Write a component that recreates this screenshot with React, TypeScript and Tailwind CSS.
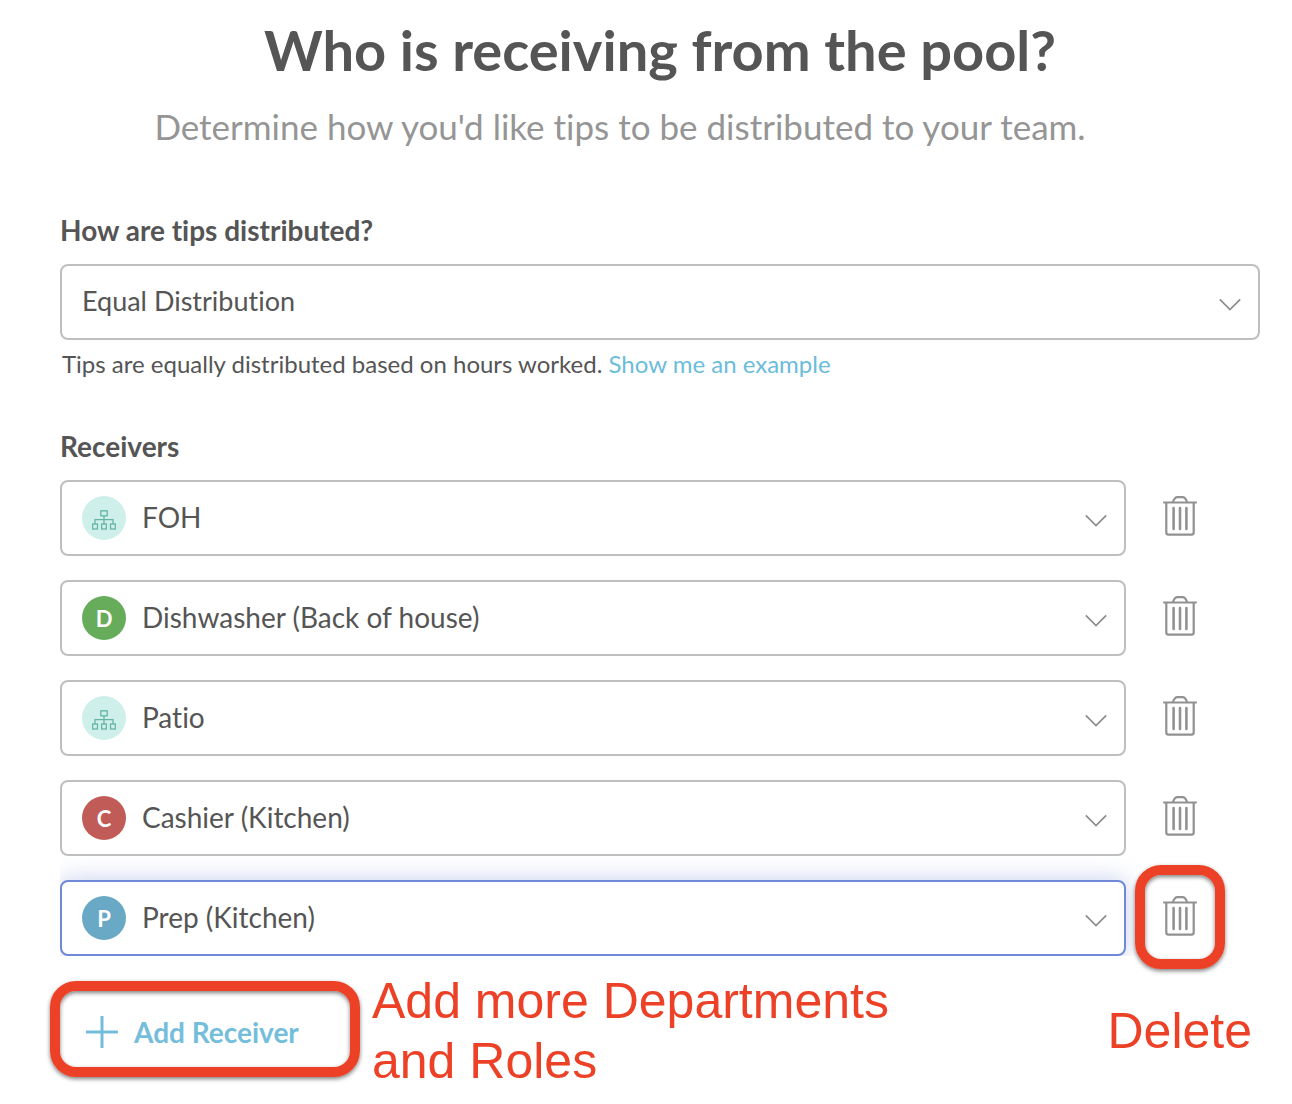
import React, { useState } from "react";

type Receiver = {
  id: number;
  name: string;
  kind: "department" | "role";
  color: string;
};

const initialReceivers: Receiver[] = [
  { id: 1, name: "FOH", kind: "department", color: "bg-[#cff0ea]" },
  { id: 2, name: "Dishwasher (Back of house)", kind: "role", color: "bg-[#67ac5b]" },
  { id: 3, name: "Patio", kind: "department", color: "bg-[#cff0ea]" },
  { id: 4, name: "Cashier (Kitchen)", kind: "role", color: "bg-[#c15b58]" },
  { id: 5, name: "Prep (Kitchen)", kind: "role", color: "bg-[#69a9c5]" },
];

function Chevron() {
  return (
    <svg
      className="pointer-events-none absolute right-[18px] top-8 h-4 w-6"
      viewBox="0 0 24 16"
      fill="none"
      stroke="#8c8c8c"
      strokeWidth="1.7"
    >
      <path d="M1.8 3.3 12 13.5 22.2 3.3" />
    </svg>
  );
}

function DepartmentIcon() {
  return (
    <svg
      className="mt-1 h-5 w-6"
      viewBox="0 0 24 20"
      fill="none"
      stroke="#64b5a5"
      strokeWidth="1.3"
    >
      <rect x="8.8" y="0.8" width="6.4" height="5" />
      <path d="M12 6v8M3 14v-4.3h18V14" />
      <rect x="0.7" y="14" width="4.8" height="5" />
      <rect x="9.6" y="14" width="4.8" height="5" />
      <rect x="18.5" y="14" width="4.8" height="5" />
    </svg>
  );
}

function TrashIcon() {
  return (
    <svg
      className="h-10 w-9"
      viewBox="0 0 36 40"
      fill="none"
      stroke="#919191"
      strokeWidth="2.2"
      strokeLinecap="round"
      strokeLinejoin="round"
    >
      <path d="M2 6.5h32M4.3 7v29.5a2.2 2.2 0 0 0 2.2 2.2h23a2.2 2.2 0 0 0 2.2-2.2V7" />
      <path d="M11 6c1-3.2 2.6-4.900 4.500-4.900h5c1.900 0 3.500 1.700 4.500 4.900" />
      <path d="M11.600 12v21M18 12v21M24.400 12v21" strokeWidth="2.600" />
    </svg>
  );
}

function App() {
  const [receivers, setReceivers] = useState(initialReceivers);
  const last = receivers.length - 1;

  const removeReceiver = (id: number) =>
    setReceivers(receivers.filter((r) => r.id !== id));

  return (
    <div className="min-h-screen bg-white pb-4 pl-15 pr-8 pt-5 font-[Lato,'Liberation_Sans',sans-serif] text-[#555555] [font-variant-ligatures:none]">
      <h1 className="text-center text-[56px] font-bold leading-[60px]">
        Who is receiving from the pool?
      </h1>
      <p className="mt-6 pr-20 text-center text-[35px] leading-[44px] text-[#959595]">
        Determine how you'd like tips to be distributed to your team.
      </p>

      <label
        htmlFor="distribution"
        className="mt-16 block text-[28px] font-bold leading-9"
      >
        How are tips distributed?
      </label>
      <div className="relative mt-4">
        <select
          id="distribution"
          className="h-19 w-full appearance-none rounded-lg border-2 border-[#bfbfbf] bg-white pb-0.5 pl-5 pr-14 text-[27px] outline-none"
        >
          <option>Equal Distribution</option>
        </select>
        <Chevron />
      </div>
      <p className="ml-0.5 mt-2 text-[24px] leading-8">
        Tips are equally distributed based on hours worked.{" "}
        <a href="#example" className="text-[#6cbcdb]">
          Show me an example
        </a>
      </p>

      <h2 className="mt-12 text-[28px] font-bold leading-9">Receivers</h2>
      <ul className="mt-4 flex flex-col gap-6">
        {receivers.map((receiver, i) => (
          <li key={receiver.id} className="flex items-center">
            <div className="relative flex-1">
              <select
                aria-label={`Receiver ${i + 1}`}
                className={
                  i === last
                    ? "block h-19 w-full appearance-none rounded-lg border-2 border-[#7088d8] bg-white pb-0.5 pl-20 pr-14 text-[28px] shadow-[0_0_24px_#7088d866] outline-none [clip-path:inset(-24px_-24px_0_0)]"
                    : "block h-19 w-full appearance-none rounded-lg border-2 border-[#bfbfbf] bg-white pb-0.5 pl-20 pr-14 text-[28px] outline-none"
                }
              >
                <option>{receiver.name}</option>
              </select>
              <span
                className={`pointer-events-none absolute left-[22px] top-4 flex size-11 items-center justify-center rounded-full text-[22px] font-bold text-white ${receiver.color}`}
              >
                {receiver.kind === "department" ? (
                  <DepartmentIcon />
                ) : (
                  receiver.name[0]
                )}
              </span>
              <Chevron />
            </div>
            <div className="relative ml-9 mr-[62px] pb-1">
              <button
                type="button"
                aria-label={`Delete ${receiver.name}`}
                className="block cursor-pointer"
                onClick={() => removeReceiver(receiver.id)}
              >
                <TrashIcon />
              </button>
              {i === last && (
                <span className="pointer-events-none absolute -inset-x-[27px] -bottom-[29px] -top-[31px] rounded-[26px] border-10 border-[#ec4126] shadow-[0_2px_4px_#00000080,inset_0_2px_4px_#00000080]" />
              )}
            </div>
          </li>
        ))}
      </ul>

      <div className="mt-[15px] flex items-start text-[50px] leading-[60px] text-[#ec4126]">
        <div className="-ml-2.5 mt-2.5 rounded-[26px] border-10 border-[#ec4126] shadow-[0_2px_4px_#00000080,inset_0_2px_4px_#00000080]">
          <button
            type="button"
            className="flex h-19 w-[290px] cursor-pointer items-center gap-4 pl-[26px] pt-1.5 text-[28px] font-bold text-[#74bedb]"
          >
            <svg
              className="size-8"
              viewBox="0 0 32 32"
              stroke="#74bedb"
              strokeWidth="3"
            >
              <path d="M16 0v32M0 16h32" />
            </svg>
            Add Receiver
          </button>
        </div>
        <p className="ml-3 font-['Liberation_Sans',Arial,sans-serif]">
          Add more Departments
          <br />
          and Roles
        </p>
        <p className="ml-auto mr-2 mt-[30px] font-['Liberation_Sans',Arial,sans-serif]">
          Delete
        </p>
      </div>
    </div>
  );
}

export default App;
